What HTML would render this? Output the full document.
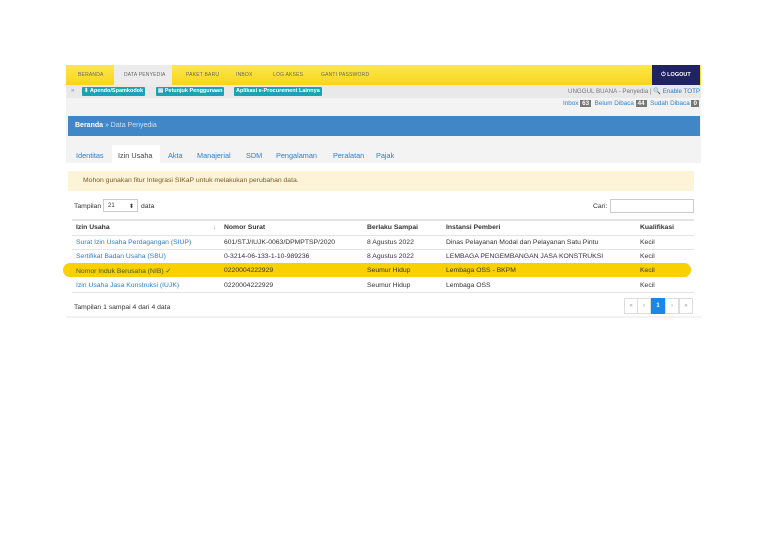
<!DOCTYPE html>
<html><head><meta charset="utf-8"><style>
*{margin:0;padding:0;box-sizing:border-box}
body{width:768px;height:543px;background:#fff;font-family:"Liberation Sans",sans-serif;position:relative;overflow:hidden;font-size:7px;color:#333}
.a{position:absolute}
.nav{left:66px;top:65px;width:635px;height:20px;background:linear-gradient(#fde74a,#f7d51c)}
.nav span{position:absolute;top:7px;font-size:5px;color:#666;letter-spacing:.2px}
.logout{left:652px;top:65px;width:48px;height:20px;background:#1f2361;color:#fff;font-size:5.5px;font-weight:bold;text-align:center;line-height:20px}
.bar2{left:66px;top:85px;width:635px;height:13px;background:#e9e9e9}
.btn{position:absolute;top:87px;height:9px;background:#1aa3b3;color:#fff;font-size:5.5px;font-weight:bold;line-height:9px;padding:0 2px;border-radius:1px}
.cont{left:66px;top:98px;width:635px;height:220px;background:#f3f3f3}
.bc{left:68px;top:116px;width:632px;height:20px;background:#4187c8;color:#fff;font-size:7px;line-height:20px;padding-left:7px}
.tab{position:absolute;top:151px;font-size:7.3px;color:#2a7fd0}
.panel{left:66px;top:163px;width:635px;height:153px;background:#fff}
.alert{left:68px;top:171px;width:626px;height:20px;background:#fdf3d6;color:#7a5c2a;font-size:6.8px;line-height:20px;padding-left:15px}
.t{position:absolute;font-size:6.8px;white-space:nowrap}
.b{color:#2a7fd0}
.hl{left:63px;top:263px;width:628px;height:14px;background:#f9d000;border-radius:7px}
.ln{position:absolute;left:72px;width:622px;height:1px;background:#e4e4e4}
.pg{position:absolute;top:298px;width:14px;height:16px;border:1px solid #ddd;background:#fff;color:#999;font-size:6px;text-align:center;line-height:14px}
</style></head><body>
<div class="a nav">
<span style="left:12px">BERANDA</span>
<div class="a" style="left:48px;top:0;width:58px;height:20px;background:#ececec"></div>
<span style="left:58px">DATA PENYEDIA</span>
<span style="left:120px">PAKET BARU</span>
<span style="left:170px">INBOX</span>
<span style="left:207px">LOG AKSES</span>
<span style="left:255px">GANTI PASSWORD</span>
</div>
<div class="a logout">⏻ LOGOUT</div>
<div class="a bar2"></div>
<div class="a" style="left:71px;top:88px;font-size:6px;color:#4a8fd8">»</div>
<div class="btn" style="left:82px">⬇ Apendo/Spamkodok</div>
<div class="btn" style="left:156px">▤ Petunjuk Penggunaan</div>
<div class="btn" style="left:234px">Aplikasi e-Procurement Lainnya</div>
<div class="t" style="left:568px;top:87px;font-size:6.2px;color:#777">UNGGUL BUANA - Penyedia | <span class="b">🔍 Enable TOTP</span></div>
<div class="a cont"></div>
<div class="t b" style="left:563px;top:100px;font-size:6.3px">Inbox <b style="background:#777;color:#fff;padding:0 2px">63</b> &nbsp;Belum Dibaca <b style="background:#777;color:#fff;padding:0 2px">44</b> &nbsp;Sudah Dibaca <b style="background:#777;color:#fff;padding:0 2px">0</b></div>
<div class="a bc"><b>Beranda</b> <span style="color:#cfe0f2">» Data Penyedia</span></div>
<div class="a" style="left:112px;top:145px;width:48px;height:18px;background:#fff"></div>
<div class="tab" style="left:76px">Identitas</div>
<div class="tab" style="left:118px;color:#444">Izin Usaha</div>
<div class="tab" style="left:168px">Akta</div>
<div class="tab" style="left:197px">Manajerial</div>
<div class="tab" style="left:246px">SDM</div>
<div class="tab" style="left:276px">Pengalaman</div>
<div class="tab" style="left:333px">Peralatan</div>
<div class="tab" style="left:376px">Pajak</div>
<div class="a panel"></div>
<div class="a alert">Mohon gunakan fitur Integrasi SIKaP untuk melakukan perubahan data.</div>
<div class="t" style="left:74px;top:203px">Tampilan</div>
<div class="a" style="left:103px;top:199px;width:35px;height:13px;border:1px solid #ccc;font-size:6px;padding:3px 0 0 4px">21 <span style="float:right;margin-right:3px">⬍</span></div>
<div class="t" style="left:141px;top:203px">data</div>
<div class="t" style="left:593px;top:203px">Cari:</div>
<div class="a" style="left:610px;top:199px;width:84px;height:14px;border:1px solid #ccc"></div>
<div class="ln" style="top:219px;height:2px"></div>
<div class="t" style="left:76px;top:224px;font-weight:bold">Izin Usaha</div>
<div class="t" style="left:213px;top:224px;color:#999">↓</div>
<div class="t" style="left:224px;top:224px;font-weight:bold">Nomor Surat</div>
<div class="t" style="left:367px;top:224px;font-weight:bold">Berlaku Sampai</div>
<div class="t" style="left:446px;top:224px;font-weight:bold">Instansi Pemberi</div>
<div class="t" style="left:640px;top:224px;font-weight:bold">Kualifikasi</div>
<div class="ln" style="top:235px"></div>
<div class="t b" style="left:76px;top:239px">Surat Izin Usaha Perdagangan (SIUP)</div>
<div class="t" style="left:224px;top:239px">601/STJ/IUJK-0063/DPMPTSP/2020</div>
<div class="t" style="left:367px;top:239px">8 Agustus 2022</div>
<div class="t" style="left:446px;top:239px">Dinas Pelayanan Modal dan Pelayanan Satu Pintu</div>
<div class="t" style="left:640px;top:239px">Kecil</div>
<div class="ln" style="top:249px"></div>
<div class="t b" style="left:76px;top:253px">Sertifikat Badan Usaha (SBU)</div>
<div class="t" style="left:224px;top:253px">0-3214-06-133-1-10-989236</div>
<div class="t" style="left:367px;top:253px">8 Agustus 2022</div>
<div class="t" style="left:446px;top:253px">LEMBAGA PENGEMBANGAN JASA KONSTRUKSI</div>
<div class="t" style="left:640px;top:253px">Kecil</div>
<div class="a hl"></div>
<div class="t" style="left:76px;top:267px;color:#3d5a1a">Nomor Induk Berusaha (NIB) ✓</div>
<div class="t" style="left:224px;top:267px">0220004222929</div>
<div class="t" style="left:367px;top:267px">Seumur Hidup</div>
<div class="t" style="left:446px;top:267px">Lembaga OSS - BKPM</div>
<div class="t" style="left:640px;top:267px">Kecil</div>
<div class="t b" style="left:76px;top:282px">Izin Usaha Jasa Konstruksi (IUJK)</div>
<div class="t" style="left:224px;top:282px">0220004222929</div>
<div class="t" style="left:367px;top:282px">Seumur Hidup</div>
<div class="t" style="left:446px;top:282px">Lembaga OSS</div>
<div class="t" style="left:640px;top:282px">Kecil</div>
<div class="ln" style="top:292px"></div>
<div class="t" style="left:74px;top:304px">Tampilan 1 sampai 4 dari 4 data</div>
<div class="pg" style="left:624px">«</div>
<div class="pg" style="left:637px">‹</div>
<div class="pg" style="left:651px;background:#1a86e8;border-color:#1a86e8;color:#fff;font-weight:bold">1</div>
<div class="pg" style="left:665px">›</div>
<div class="pg" style="left:679px">»</div>
</body></html>
